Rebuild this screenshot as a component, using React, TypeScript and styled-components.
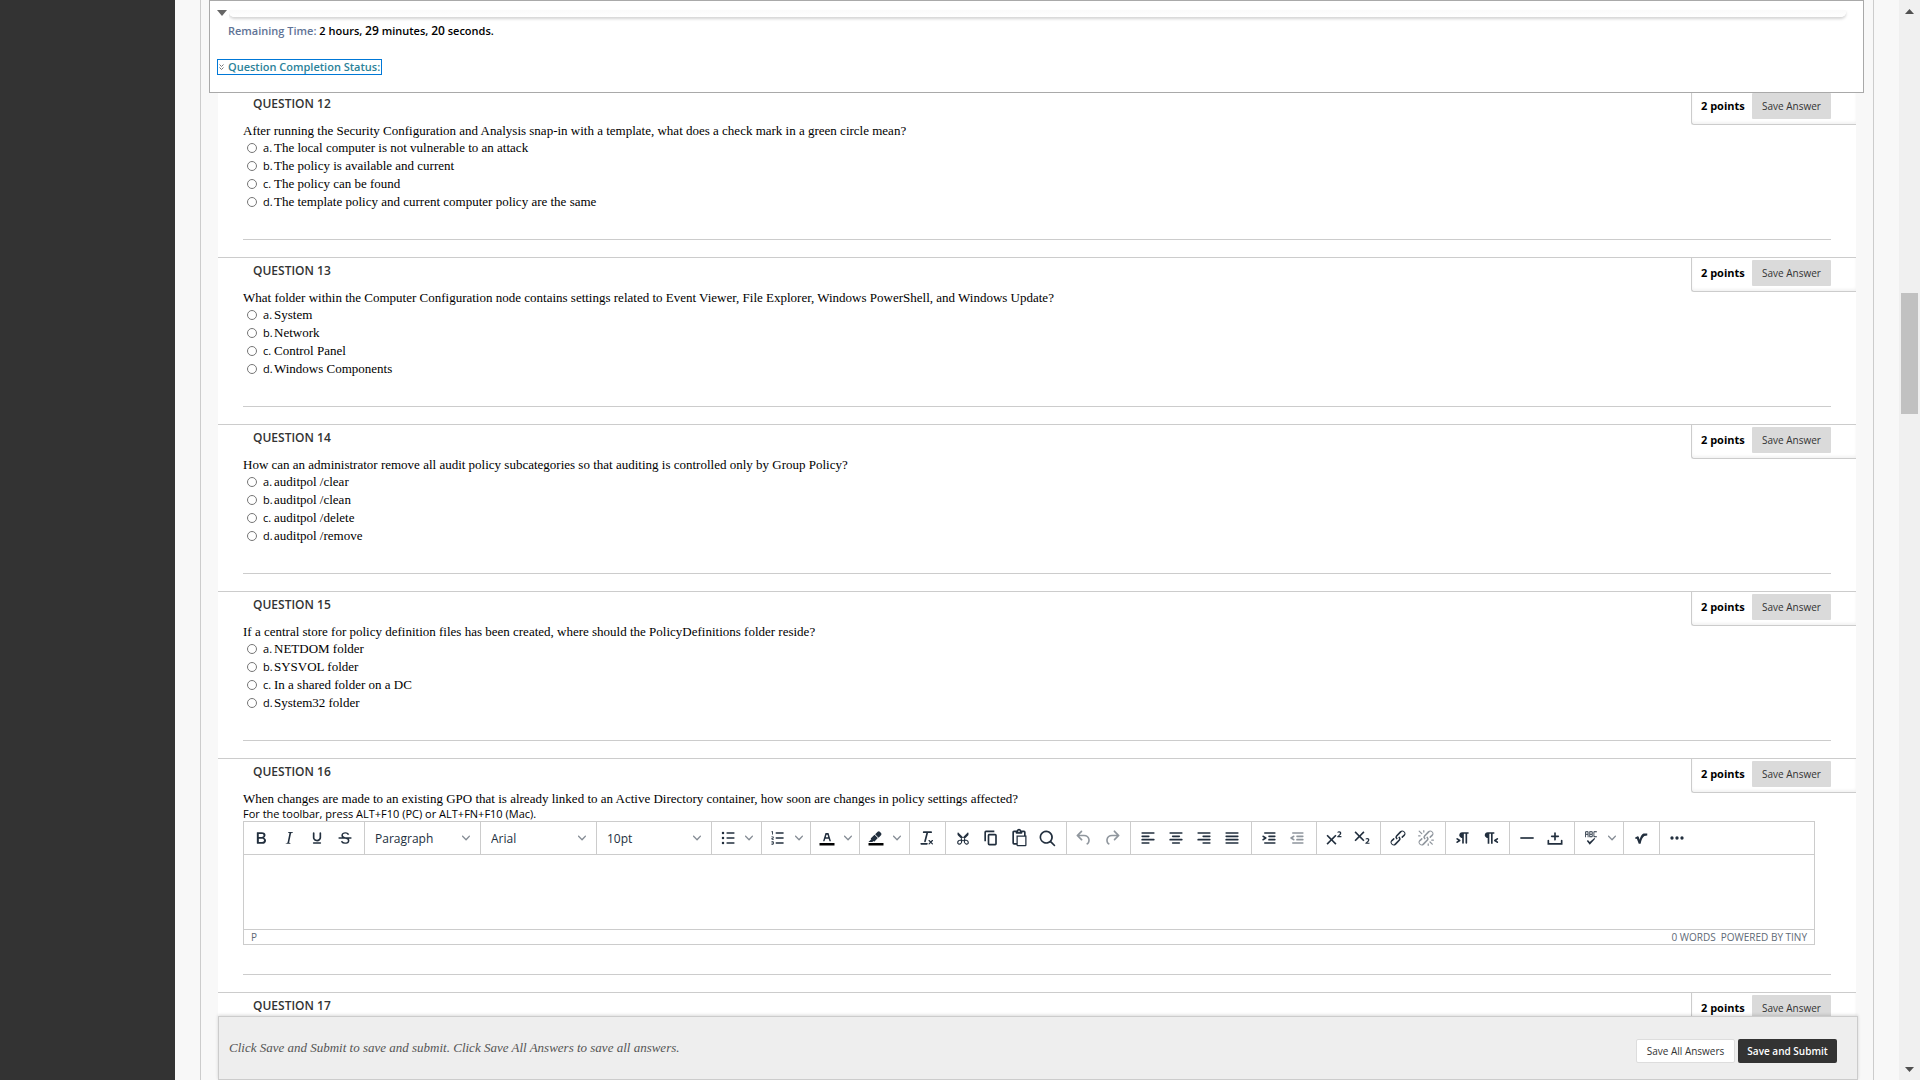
import React from 'react';
import styled, { createGlobalStyle } from 'styled-components';

const SANS = '"Open Sans", "Noto Sans", sans-serif';
const SERIF = '"Liberation Serif", "Times New Roman", serif';

const GlobalStyle = createGlobalStyle`
  *, *::before, *::after { box-sizing: border-box; }
  body { margin: 0; background: #f8f8f8; font-family: ${SANS}; color: #000; }
  button, select, textarea, input { font-family: inherit; margin: 0; }
`;

const Shell = styled.div`
  display: flex;
  height: 100vh;
  overflow: hidden;
`;

const Sidebar = styled.aside`
  flex: 0 0 175px;
  background: #333;
`;

const Page = styled.div`
  flex: 1;
  min-width: 0;
  display: flex;
  padding: 0 25px;
  background: #f8f8f8;
`;

const Frame = styled.main`
  flex: 1;
  min-width: 0;
  display: flex;
  flex-direction: column;
  border: solid #ccc;
  border-width: 0 1px;
`;

const StatusBox = styled.header`
  position: relative;
  z-index: 2;
  flex: none;
  height: 93px;
  margin: 0 9px 0 8px;
  padding: 8px 17px 0 7px;
  background: #fff;
  border: 1px solid #a9a9a9;
`;

const GrooveRow = styled.div`
  display: flex;
  align-items: center;
  gap: 2px;
  height: 8px;
`;

const Collapse = styled.button`
  flex: none;
  width: 10px;
  height: 6px;
  padding: 0;
  border: 0;
  background: #666;
  clip-path: polygon(0 0, 100% 0, 50% 100%);
`;

const Groove = styled.div`
  flex: 1;
  height: 7px;
  border-radius: 0 0 5px 5px;
  background: linear-gradient(#fafafa, #fff);
  box-shadow: 0 2px 3px #d4d4d4;
  clip-path: inset(0 -4px -6px 0);
`;

const Remaining = styled.p`
  margin: 5px 0 0 11px;
  font-size: 11px;
  font-weight: 600;
  line-height: 18px;
`;

const RemainingLabel = styled.span`
  color: #5f7396;
`;

const Digits = styled.span`
  font-size: 12px;
`;

const StatusLink = styled.a`
  display: inline-flex;
  align-items: center;
  gap: 4px;
  height: 16px;
  margin-top: 19px;
  padding: 0 1px;
  border: 1px solid #0078d7;
  font-size: 11px;
  font-weight: 600;
  line-height: 14px;
  color: #2b8299;
  text-decoration: none;
`;

const QuestionList = styled.div`
  flex: 1;
  min-height: 0;
  overflow: hidden;
  margin: -3px 17px 0;
  background: #fff;
`;

const QuestionCard = styled.section`
  display: flow-root;
  padding: 0 25px 17px;
  border-top: 1px solid #ccc;
`;

const QuestionBody = styled.div<{ $gap: number }>`
  padding-bottom: ${p => p.$gap}px;
  border-bottom: 1px solid #ccc;
`;

const PointsTab = styled.div`
  float: right;
  display: flex;
  justify-content: space-between;
  width: 165px;
  height: 34px;
  margin-right: -25px;
  padding: 2px 25px 0 9px;
  border: solid #ccc;
  border-width: 0 0 1px 1px;
  border-radius: 0 0 0 3px;
  box-shadow: inset 0 -2px 3px #f3f3f3;
  font-size: 11px;
  font-weight: 700;
  line-height: 25px;
`;

const SaveAnswer = styled.button`
  width: 79px;
  height: 26px;
  padding: 0;
  border: 0;
  border-radius: 1px;
  background: #dadada;
  color: #333;
  font-size: 10px;
`;

const Title = styled.h3`
  margin: 0;
  padding: 4px 0 10px 10px;
  font-size: 12px;
  font-weight: 600;
  line-height: 18px;
  color: #333;
`;

const Prompt = styled.p`
  margin: 0;
  font: 13px/16px ${SERIF};
`;

const Options = styled.div`
  display: grid;
  grid-auto-rows: 18px;
`;

const Option = styled.label`
  display: flex;
  align-items: center;
  padding-left: 4px;
  font: 13px/18px ${SERIF};
`;

const Radio = styled.input`
  appearance: none;
  flex: none;
  width: 10px;
  height: 10px;
  border: 1px solid #767676;
  border-radius: 50%;
  background: #fff;
  &:checked { background: #767676; }
`;

const Letter = styled.span`
  width: 17px;
  padding-left: 6px;
  font: 11px/18px ${SANS};
  white-space: nowrap;
`;

const Note = styled.p`
  margin: 0;
  font-size: 11px;
  line-height: 14px;
`;

const Editor = styled.div`
  display: flex;
  flex-direction: column;
  height: 124px;
  margin-right: 16px;
  border: 1px solid #ccc;
`;

const Toolbar = styled.div`
  display: flex;
  flex: none;
  height: 33px;
  border-bottom: 1px solid #ccc;
`;

const Group = styled.div<{ $w: number }>`
  flex: none;
  display: flex;
  justify-content: center;
  align-items: center;
  width: ${p => p.$w}px;
  padding-right: 2px;
  border-right: 1px solid #ccc;
  &:last-child { border-right: 0; }
`;

const ToolButton = styled.button<{ $split?: boolean; $off?: boolean }>`
  display: flex;
  align-items: center;
  justify-content: center;
  gap: 7px;
  width: ${p => (p.$split ? 42 : 28)}px;
  height: 28px;
  padding: 0;
  border: 0;
  background: none;
  color: #222f3e;
  opacity: ${p => (p.$off ? 0.5 : 1)};
`;

const Icon = styled.svg`
  flex: none;
  width: 20px;
  height: 20px;
  fill: currentColor;
`;

const Chevron = styled.svg`
  flex: none;
  width: 8px;
  height: 8px;
  fill: #222f3e;
  opacity: 0.55;
  pointer-events: none;
`;

const Select = styled.select`
  appearance: none;
  flex: 1;
  height: 28px;
  padding: 0 0 0 10px;
  border: 0;
  background: none;
  font-size: 12px;
  color: #222f3e;
`;

const SelectGroup = styled(Group)`
  padding-right: 10px;
`;

const TextArea = styled.textarea`
  flex: 1;
  padding: 8px;
  border: 0;
  resize: none;
  outline: 0;
`;

const StatusBar = styled.div`
  display: flex;
  justify-content: space-between;
  flex: none;
  height: 15px;
  padding: 0 7px;
  border-top: 1px solid #ccc;
  font-size: 10px;
  line-height: 15px;
  color: #606a76;
`;

const StatusRight = styled.span`
  display: flex;
  gap: 5px;
`;

const TinyLink = styled.a`
  color: inherit;
  text-decoration: none;
`;

const SubmitBar = styled.footer`
  position: relative;
  z-index: 2;
  flex: none;
  display: flex;
  align-items: center;
  justify-content: space-between;
  height: 64px;
  margin: 0 15px 0 17px;
  padding: 0 20px 0 10px;
  background: #eee;
  border: 1px solid #ccc;
  box-shadow: 0 -1px 3px rgba(0, 0, 0, 0.15);
`;

const Hint = styled.p`
  margin: 0;
  font: italic 13px/16px ${SERIF};
  color: #555;
`;

const Actions = styled.div`
  display: flex;
  gap: 3px;
  padding-top: 6px;
`;

const Action = styled.button<{ $primary?: boolean }>`
  width: 99px;
  height: 24px;
  padding: 0;
  border: ${p => (p.$primary ? '0' : '1px solid #ddd')};
  border-radius: 2px;
  background: ${p => (p.$primary ? '#333' : '#fff')};
  color: ${p => (p.$primary ? '#fff' : '#333')};
  font-size: 10px;
  font-weight: ${p => (p.$primary ? 600 : 400)};
`;

const ScrollTrack = styled.div`
  flex: 0 0 21px;
  display: flex;
  flex-direction: column;
  align-items: center;
  padding: 9px 0 8px;
  background: #f0f0f0;
`;

const ScrollArrow = styled.span<{ $down?: boolean }>`
  width: 9px;
  height: 5px;
  background: #505050;
  clip-path: ${p => (p.$down ? 'polygon(0 0, 100% 0, 50% 100%)' : 'polygon(50% 0, 100% 100%, 0 100%)')};
`;

const ScrollThumb = styled.span`
  width: 17px;
  height: 121px;
  margin: 279px 0 auto;
  background: #c1c1c1;
`;

const bar = (x: number, y: number, w: number) =>
  `M${x} ${y}h${w}c.6 0 1 .4 1 1s-.4 1-1 1H${x}a1 1 0 110-2z`;
const dot = (x: number, y: number, r: number) =>
  `M${x - r} ${y}a${r} ${r} 0 10${2 * r} 0a${r} ${r} 0 10-${2 * r} 0z`;

const ICONS: Record<string, string> = {
  Bold: 'M7.8 19c-.3 0-.5 0-.6-.2l-.2-.5V5.7c0-.2 0-.4.2-.5l.6-.2h5c1.5 0 2.7.3 3.5 1 .7.6 1.1 1.4 1.1 2.5a3 3 0 01-.6 1.9c-.4.6-1 1-1.6 1.2.4.1.9.3 1.3.6s.8.7 1 1.2c.4.4.5 1 .5 1.6 0 1.3-.4 2.3-1.3 3-.8.7-2.1 1-3.8 1H7.8zm5-8.3c.6 0 1.2-.1 1.6-.5.4-.3.6-.7.6-1.3 0-1.1-.8-1.7-2.3-1.7H9.3v3.5h3.4zm.5 6c.7 0 1.3-.1 1.7-.4.4-.4.6-.9.6-1.5s-.2-1-.7-1.4c-.4-.3-1-.4-2-.4H9.4v3.8h4z',
  Italic: 'M16.7 4.7l-.1.9h-.3c-.6 0-1 0-1.4.3-.3.3-.4.6-.5 1.1l-2.1 9.8v.6c0 .5.4.8 1.4.8h.2l-.2.8H8l.2-.8h.2c1.1 0 1.8-.5 2-1.5l2-9.8.1-.5c0-.6-.4-.8-1.4-.8h-.3l.2-.9h5.8z',
  Underline: 'M16 5c.6 0 1 .4 1 1v5.5a4 4 0 01-.4 1.8l-1 1.4a5.3 5.3 0 01-5.5 1 5 5 0 01-1.6-1c-.5-.4-.8-.9-1.1-1.4a4 4 0 01-.4-1.8V6c0-.6.4-1 1-1s1 .4 1 1v5.5c0 .3 0 .6.2 1l.6.7a3.3 3.3 0 002.2.8 3.4 3.4 0 002.2-.8c.3-.2.4-.5.6-.8l.2-.9V6c0-.6.4-1 1-1zM8 17h8c.6 0 1 .4 1 1s-.4 1-1 1H8a1 1 0 010-2z',
  Strikethrough: 'M15.6 8.5c-.5-.7-1-1.1-1.3-1.3-.6-.4-1.3-.6-2-.6-2.7 0-2.8 1.7-2.8 2.1 0 1.6 1.8 2 3.2 2.3 4.4.9 4.6 2.8 4.6 3.9 0 1.4-.7 4.1-5 4.1A6.2 6.2 0 017 16.4l1.5-1.1c.4.6 1.6 2 3.7 2 1.6 0 2.5-.4 3-1.2.4-.8.3-2-.8-2.6-.7-.4-1.6-.7-2.9-1-1-.2-3.9-.8-3.9-3.6C7.6 6 10.3 5 12.4 5c2.9 0 4.2 1.6 4.7 2.4l-1.5 1.1zM5 11h14a1 1 0 010 2H5a1 1 0 010-2z',
  'Bullet list': bar(11, 5, 8) + bar(11, 11, 8) + bar(11, 17, 8) + dot(6, 6, 1.5) + dot(6, 12, 1.5) + dot(6, 18, 1.5),
  'Numbered list': bar(10, 17, 8) + bar(10, 11, 8) + bar(10, 5, 8) + 'M6 4v3.5c0 .3-.2.5-.5.5a.5.5 0 01-.5-.5V5h-.5a.5.5 0 010-1H6zm-1 8.8l.2.2h1.3c.3 0 .5.2.5.5s-.2.5-.5.5H4.9a1 1 0 01-.9-1V13c0-.4.3-.8.6-1l1.2-.4.2-.3a.2.2 0 00-.2-.2H4.5a.5.5 0 01-.5-.5c0-.3.2-.5.5-.5h1.6c.5 0 .9.4.9 1v.1c0 .4-.3.8-.6 1l-1.2.4-.2.3zM7 17v2c0 .6-.4 1-1 1H4.5a.5.5 0 010-1h1.2c.2 0 .3-.1.3-.3 0-.2-.1-.3-.3-.3H4.4a.4.4 0 110-.8h1.3c.2 0 .3-.1.3-.3 0-.2-.1-.3-.3-.3H4.5a.5.5 0 110-1H6c.6 0 1 .4 1 1z',
  'Text color': 'M8.7 16h-.8a.5.5 0 01-.5-.6l2.7-9c.1-.3.3-.4.5-.4h2.8c.2 0 .4.1.5.4l2.7 9a.5.5 0 01-.5.6h-.8a.5.5 0 01-.4-.4l-.7-2.2c0-.3-.3-.4-.5-.4h-3.4c-.2 0-.4.1-.5.4l-.7 2.2c0 .3-.2.4-.4.4zm2.6-7.6l-.6 2a.5.5 0 00.5.6h1.6a.5.5 0 00.5-.6l-.6-2c0-.3-.3-.4-.5-.4h-.4c-.2 0-.4.1-.5.4z',
  'Background color': 'M7.7 16.7H3l3.3-3.3-.7-.8L10.2 8l4 4.1-4 4.2c-.2.2-.6.2-.8 0l-.6-.7-1.1 1.1zm5-7.5L11 7.4l3-2.9a2 2 0 012.6 0L18 6c.7.7.7 2 0 2.7l-2.9 2.9-1.8-1.8-.5-.6',
  'Clear formatting': 'M13.2 6a1 1 0 010 .2l-2.6 10a1 1 0 01-1 .8h-.2a.8.8 0 01-.8-1l2.6-10H8a1 1 0 110-2h9a1 1 0 010 2h-3.8zM5 18h7a1 1 0 010 2H5a1 1 0 010-2zm13 1.5L16.5 18 15 19.5a.7.7 0 01-1-1l1.5-1.5-1.5-1.5a.7.7 0 011-1l1.5 1.5 1.5-1.5a.7.7 0 011 1L17.5 17l1.5 1.5a.7.7 0 01-1 1z',
  Cut: 'M18 15c.6.7 1 1.4 1 2.3 0 .8-.2 1.5-.7 2l-.8.5-1 .2c-.4 0-.8 0-1.2-.3a3.9 3.9 0 01-2.1-2.2c-.2-.5-.3-1-.2-1.5l-1-1-1 1c0 .5 0 1-.2 1.5-.1.5-.4 1-.9 1.4-.3.4-.7.6-1.2.8l-1.2.3c-.4 0-.7 0-1-.2-.3 0-.6-.3-.8-.5-.5-.5-.8-1.2-.7-2 0-.9.4-1.6 1-2.2A3.7 3.7 0 018.6 14H9l1-1-4-4-.5-1a3.3 3.3 0 010-2c0-.4.3-.7.5-1l6 6 6-6 .5 1a3.3 3.3 0 010 2c0 .4-.3.7-.5 1l-4 4 1 1h.5c.4 0 .8 0 1.2.3.5.2.9.4 1.2.8zm-8.5 2.2l.1-.4v-.3-.4a1 1 0 00-.2-.5 1 1 0 00-.4-.2 1.6 1.6 0 00-.8 0 2.6 2.6 0 00-.8.3 2.5 2.5 0 00-.9 1.1l-.1.4v.7l.2.5.5.2h.7a2.5 2.5 0 00.8-.3 2.8 2.8 0 001-1zm2.5-2.8c.4 0 .7-.1 1-.4.3-.3.4-.6.4-1s-.1-.7-.4-1c-.3-.3-.6-.4-1-.4s-.7.1-1 .4c-.3.3-.4.6-.4 1s.1.7.4 1c.3.3.6.4 1 .4zm5.4 4l.2-.5v-.4-.3a2.6 2.6 0 00-.3-.8 2.4 2.4 0 00-.7-.7 2.5 2.5 0 00-.8-.3 1.5 1.5 0 00-.8 0 1 1 0 00-.4.2 1 1 0 00-.2.5 1.5 1.5 0 000 .7v.4l.3.4.3.4a2.8 2.8 0 00.8.5l.4.1h.7l.5-.2z',
  Copy: 'M16 3H6a2 2 0 00-2 2v11h2V5h10V3zm1 4a2 2 0 012 2v10a2 2 0 01-2 2h-7a2 2 0 01-2-2V9c0-1.2.9-2 2-2h7zm0 12V9h-7v10h7z',
  Paste: 'M18 9V5h-2v1c0 .6-.4 1-1 1H9a1 1 0 01-1-1V5H6v13h3V9h9zM9 20H6a2 2 0 01-2-2V5c0-1.1.9-2 2-2h3.2A3 3 0 0112 1a3 3 0 012.8 2H18a2 2 0 012 2v4h1v12l-1 1H10l-1-1v-1zm1.5-9.5v10h9v-10h-9zM12 3a1 1 0 00-1 1c0 .5.4 1 1 1s1-.5 1-1-.4-1-1-1z',
  Find: 'M16 17.3a8 8 0 111.4-1.4l4.3 4.4a1 1 0 01-1.4 1.4l-4.4-4.3zm-5-.3a6 6 0 100-12 6 6 0 000 12z',
  Undo: 'M6.4 8H12c3.7 0 6.2 2 6.8 5.1.6 2.7-.4 5.6-2.3 6.8a1 1 0 01-1-1.8c1.1-.6 1.8-2.7 1.4-4.6-.5-2.1-2.1-3.5-4.9-3.5H6.4l3.3 3.3a1 1 0 11-1.4 1.4l-5-5a1 1 0 010-1.4l5-5a1 1 0 011.4 1.4L6.4 8z',
  Redo: 'M17.6 10H12c-2.8 0-4.4 1.4-4.9 3.5-.4 2 .3 4 1.4 4.6a1 1 0 11-1 1.8c-2-1.2-2.9-4.1-2.3-6.8.6-3 3-5.1 6.8-5.1h5.6l-3.3-3.3a1 1 0 111.4-1.4l5 5a1 1 0 010 1.4l-5 5a1 1 0 01-1.4-1.4l3.3-3.3z',
  'Align left': bar(5, 5, 14) + bar(5, 9, 8) + bar(5, 13, 14) + bar(5, 17, 8),
  'Align center': bar(5, 5, 14) + bar(8, 9, 8) + bar(5, 13, 14) + bar(8, 17, 8),
  'Align right': bar(5, 5, 14) + bar(11, 9, 8) + bar(5, 13, 14) + bar(11, 17, 8),
  Justify: bar(5, 5, 14) + bar(5, 9, 14) + bar(5, 13, 14) + bar(5, 17, 14),
  Indent: bar(7, 5, 12) + bar(12, 9, 7) + bar(12, 13, 7) + bar(7, 17, 12) + 'M4.4 13.2L6.2 12l-1.8-1.2a1 1 0 011.2-1.6l3 2a1 1 0 010 1.6l-3 2a1 1 0 11-1.2-1.6z',
  Outdent: bar(7, 5, 12) + bar(12, 9, 7) + bar(12, 13, 7) + bar(7, 17, 12) + 'M8.6 13.2a1 1 0 01-1.2 1.6l-3-2a1 1 0 010-1.6l3-2a1 1 0 011.2 1.6L6.8 12l1.8 1.2z',
  Superscript: 'M15 9.4L10.4 14l4.6 4.6-1.4 1.4L9 15.4 4.4 20 3 18.6 7.6 14 3 9.4 4.4 8 9 12.6 13.6 8 15 9.4zm5.9 1.6h-5v-1l1-.8 1.7-1.6c.3-.5.5-.9.5-1.3 0-.3 0-.5-.2-.7-.2-.2-.5-.3-.9-.3l-.8.2-.7.4-.4-1.2c.2-.2.5-.4 1-.5.3-.2.8-.2 1.2-.2.8 0 1.4.2 1.8.6.4.4.6 1 .6 1.6 0 .5-.2 1-.5 1.5l-1.3 1.4-.6.5h2.6V11z',
  Subscript: 'M10.4 10l4.6 4.6-1.4 1.4L9 11.4 4.4 16 3 14.6 7.6 10 3 5.4 4.4 4 9 8.6 13.6 4 15 5.4 10.4 10zM21 19h-5v-1l1-.8 1.7-1.6c.3-.4.5-.8.5-1.2 0-.3 0-.6-.2-.7-.2-.2-.5-.3-.9-.3a2 2 0 00-.8.2l-.7.3-.4-1.1 1-.6 1.2-.2c.8 0 1.4.3 1.8.7.4.4.6.9.6 1.5s-.2 1.1-.5 1.6a8 8 0 01-1.3 1.3l-.6.6h2.6V19z',
  'Insert link': 'M6.2 12.3a1 1 0 011.4 1.4l-2 2a2 2 0 102.6 2.8l4.8-4.8a1 1 0 000-1.4 1 1 0 111.4-1.3 2.9 2.9 0 010 4L9.6 20a3.9 3.9 0 01-5.5-5.5l2-2zm11.6-.6a1 1 0 01-1.4-1.4l2-2a2 2 0 10-2.6-2.8L11 10.3a1 1 0 000 1.4A1 1 0 119.6 13a2.9 2.9 0 010-4L14.4 4a3.9 3.9 0 015.5 5.5l-2 2z',
  'Remove link': 'M6.2 12.3a1 1 0 011.4 1.4l-2 2a2 2 0 102.6 2.8l4.8-4.8a1 1 0 000-1.4 1 1 0 111.4-1.3 2.9 2.9 0 010 4L9.6 20a3.9 3.9 0 01-5.5-5.5l2-2zm11.6-.6a1 1 0 01-1.4-1.4l2-2a2 2 0 10-2.6-2.8L11 10.3a1 1 0 000 1.4A1 1 0 119.6 13a2.9 2.9 0 010-4L14.4 4a3.9 3.9 0 015.5 5.5l-2 2zM7.6 6.3a.8.8 0 01-1 1.1L3.3 4.2a.7.7 0 111-1l3.2 3.1zM5.1 8.6a.8.8 0 010 1.5H3a.8.8 0 010-1.5H5zm5-3.5a.8.8 0 01-1.5 0V3a.8.8 0 011.5 0V5zm6 11.8a.8.8 0 011-1l3.2 3.2a.8.8 0 01-1 1L16 17zm-2.2 2a.8.8 0 011.5 0V21a.8.8 0 01-1.5 0V19zm5-3.5a.7.7 0 110-1.5H21a.8.8 0 010 1.5H19z',
  'Left to right': 'M11 5h7a1 1 0 010 2h-1v11a1 1 0 01-2 0V7h-2v11a1 1 0 01-2 0v-6c-.5 0-1 0-1.4-.3A3.4 3.4 0 017.8 10a3.3 3.3 0 010-2.8 3.4 3.4 0 011.8-1.8L11 5zM4.4 16.2L6.2 15l-1.8-1.2a1 1 0 011.2-1.6l3 2a1 1 0 010 1.6l-3 2a1 1 0 11-1.2-1.6z',
  'Right to left': 'M8 5h8v2h-2v12h-2V7h-2v12H8v-7c-.5 0-1 0-1.4-.3A3.4 3.4 0 014.8 10a3.3 3.3 0 010-2.8 3.4 3.4 0 011.8-1.8L8 5zm12.2 11.2a1 1 0 11-1.2 1.6l-3-2a1 1 0 010-1.6l3-2a1 1 0 111.2 1.6L18.4 15l1.8 1.2z',
  'Horizontal line': 'M4 11h16v2H4z',
  'Nonbreaking space': 'M11 11H8a1 1 0 110-2h3V6c0-.6.4-1 1-1s1 .4 1 1v3h3c.6 0 1 .4 1 1s-.4 1-1 1h-3v3c0 .6-.4 1-1 1a1 1 0 01-1-1v-3zm10 4v5H3v-5c0-.6.4-1 1-1s1 .4 1 1v3h14v-3c0-.6.4-1 1-1s1 .4 1 1z',
  Spellcheck: 'M6 8v3H5V5c0-.3.1-.5.3-.7.2-.2.4-.3.7-.3h2c.3 0 .5.1.7.3.2.2.3.4.3.7v6H8V8H6zm0-3v2h2V5H6zm13 0h-3v5h3v1h-3a1 1 0 01-.7-.3 1 1 0 01-.3-.7V5c0-.3.1-.5.3-.7.2-.2.4-.3.7-.3h3v1zm-5 1.5l-.1.7c-.1.2-.3.3-.6.3.3 0 .5.1.6.3l.1.7V10c0 .3-.1.5-.3.7a1 1 0 01-.7.3h-3V4h3c.3 0 .5.1.7.3.2.2.3.4.3.7v1.5zM13 10V8h-2v2h2zm0-3V5h-2v2h2zm3 5l1 1-6.5 7L7 15.5l1.3-1 2.2 2.2L16 12z',
  'Math editor': 'M5 11.5l3-1.5c.8 0 1.2.3 1.4 1l1 3C11.5 9.5 13 7 15 6.500h4.500v2.500l-3.500.5C14 11 12.500 14 11.500 19H9.300L7 13l-1.500.2z',
  More: dot(6, 12, 2) + dot(12, 12, 2) + dot(18, 12, 2),
};

type ToolGroup = {
  w: number;
  tools?: string[];
  split?: boolean;
  select?: { label: string; options: string[] };
};

const GROUPS: ToolGroup[] = [
  { w: 121, tools: ['Bold', 'Italic', 'Underline', 'Strikethrough'] },
  { w: 116, select: { label: 'Block format', options: ['Paragraph', 'Heading 1', 'Heading 2'] } },
  { w: 116, select: { label: 'Font family', options: ['Arial', 'Georgia', 'Verdana'] } },
  { w: 115, select: { label: 'Font size', options: ['10pt', '12pt', '14pt'] } },
  { w: 50, tools: ['Bullet list'], split: true },
  { w: 49, tools: ['Numbered list'], split: true },
  { w: 49, tools: ['Text color'], split: true },
  { w: 50, tools: ['Background color'], split: true },
  { w: 36, tools: ['Clear formatting'] },
  { w: 121, tools: ['Cut', 'Copy', 'Paste', 'Find'] },
  { w: 64, tools: ['Undo', 'Redo'] },
  { w: 121, tools: ['Align left', 'Align center', 'Align right', 'Justify'] },
  { w: 65, tools: ['Indent', 'Outdent'] },
  { w: 64, tools: ['Superscript', 'Subscript'] },
  { w: 65, tools: ['Insert link', 'Remove link'] },
  { w: 64, tools: ['Left to right', 'Right to left'] },
  { w: 65, tools: ['Horizontal line', 'Nonbreaking space'] },
  { w: 49, tools: ['Spellcheck'], split: true },
  { w: 36, tools: ['Math editor'] },
  { w: 36, tools: ['More'] },
];

const DISABLED = ['Undo', 'Redo', 'Outdent', 'Remove link'];

const ChevronDown = () => (
  <Chevron viewBox="0 0 10 10" aria-hidden="true">
    <path d="M8.700 2.200c.3-.3.8-.3 1 0 .4.4.4.9 0 1.200L5.700 7.800c-.3.3-.9.3-1.200 0L.2 3.400a.8.8 0 010-1.200c.3-.3.8-.3 1.100 0L5 6l3.700-3.800z" />
  </Chevron>
);

function RichEditor() {
  return (
    <Editor>
      <Toolbar role="toolbar" aria-label="Editor toolbar">
        {GROUPS.map((g, i) =>
          g.select ? (
            <SelectGroup key={i} $w={g.w}>
              <Select aria-label={g.select.label}>
                {g.select.options.map(o => <option key={o}>{o}</option>)}
              </Select>
              <ChevronDown />
            </SelectGroup>
          ) : (
            <Group key={i} $w={g.w}>
              {g.tools!.map(t => (
                <ToolButton key={t} type="button" aria-label={t} $split={g.split} $off={DISABLED.includes(t)}>
                  <Icon viewBox="0 0 24 24" aria-hidden="true">
                    {t.endsWith('color') && <path d="M3 18h18v3H3z" fill="#000" />}
                    <path d={ICONS[t]} />
                  </Icon>
                  {g.split && <ChevronDown />}
                </ToolButton>
              ))}
            </Group>
          ),
        )}
      </Toolbar>
      <TextArea aria-label="Answer" />
      <StatusBar>
        <span>P</span>
        <StatusRight>
          <span>0 WORDS</span>
          <TinyLink href="#tiny">POWERED BY TINY</TinyLink>
        </StatusRight>
      </StatusBar>
    </Editor>
  );
}

type QuestionData = { n: number; prompt: string; options?: string[] };

const QUESTIONS: QuestionData[] = [
  {
    n: 12,
    prompt: 'After running the Security Configuration and Analysis snap-in with a template, what does a check mark in a green circle mean?',
    options: [
      'The local computer is not vulnerable to an attack',
      'The policy is available and current',
      'The policy can be found',
      'The template policy and current computer policy are the same',
    ],
  },
  {
    n: 13,
    prompt: 'What folder within the Computer Configuration node contains settings related to Event Viewer, File Explorer, Windows PowerShell, and Windows Update?',
    options: ['System', 'Network', 'Control Panel', 'Windows Components'],
  },
  {
    n: 14,
    prompt: 'How can an administrator remove all audit policy subcategories so that auditing is controlled only by Group Policy?',
    options: ['auditpol /clear', 'auditpol /clean', 'auditpol /delete', 'auditpol /remove'],
  },
  {
    n: 15,
    prompt: 'If a central store for policy definition files has been created, where should the PolicyDefinitions folder reside?',
    options: ['NETDOM folder', 'SYSVOL folder', 'In a shared folder on a DC', 'System32 folder'],
  },
  {
    n: 16,
    prompt: 'When changes are made to an existing GPO that is already linked to an Active Directory container, how soon are changes in policy settings affected?',
  },
];

function QuestionHead({ n }: { n: number }) {
  return (
    <>
      <PointsTab>
        <span>2 points</span>
        <SaveAnswer type="button">Save Answer</SaveAnswer>
      </PointsTab>
      <Title>QUESTION {n}</Title>
    </>
  );
}

function Question({ n, prompt, options }: QuestionData) {
  return (
    <QuestionCard>
      <QuestionHead n={n} />
      <QuestionBody $gap={options ? 28 : 29}>
        <Prompt>{prompt}</Prompt>
        {options ? (
          <Options>
            {options.map((o, i) => (
              <Option key={o}>
                <Radio type="radio" name={`q${n}`} />
                <Letter>{'abcd'[i]}.</Letter>
                {o}
              </Option>
            ))}
          </Options>
        ) : (
          <>
            <Note>For the toolbar, press ALT+F10 (PC) or ALT+FN+F10 (Mac).</Note>
            <RichEditor />
          </>
        )}
      </QuestionBody>
    </QuestionCard>
  );
}

export default function App() {
  return (
    <>
      <GlobalStyle />
      <Shell>
        <Sidebar />
        <Page>
          <Frame>
            <StatusBox>
              <GrooveRow>
                <Collapse type="button" aria-label="Collapse" />
                <Groove />
              </GrooveRow>
              <Remaining>
                <RemainingLabel>Remaining Time:</RemainingLabel> 2 hours, <Digits>29</Digits> minutes,{' '}
                <Digits>20</Digits> seconds.
              </Remaining>
              <StatusLink href="#status">
                <svg width="5" height="7" viewBox="0 0 5 7" fill="none" stroke="#777" aria-hidden="true">
                  <path d="M.5.5l2 2 2-2M.5 3.500l2 2 2-2" />
                </svg>
                Question Completion Status:
              </StatusLink>
            </StatusBox>
            <QuestionList>
              {QUESTIONS.map(q => <Question key={q.n} {...q} />)}
              <QuestionCard>
                <QuestionHead n={17} />
              </QuestionCard>
            </QuestionList>
            <SubmitBar>
              <Hint>Click Save and Submit to save and submit. Click Save All Answers to save all answers.</Hint>
              <Actions>
                <Action type="button">Save All Answers</Action>
                <Action type="submit" $primary>Save and Submit</Action>
              </Actions>
            </SubmitBar>
          </Frame>
        </Page>
        <ScrollTrack aria-hidden="true">
          <ScrollArrow />
          <ScrollThumb />
          <ScrollArrow $down />
        </ScrollTrack>
      </Shell>
    </>
  );
}
